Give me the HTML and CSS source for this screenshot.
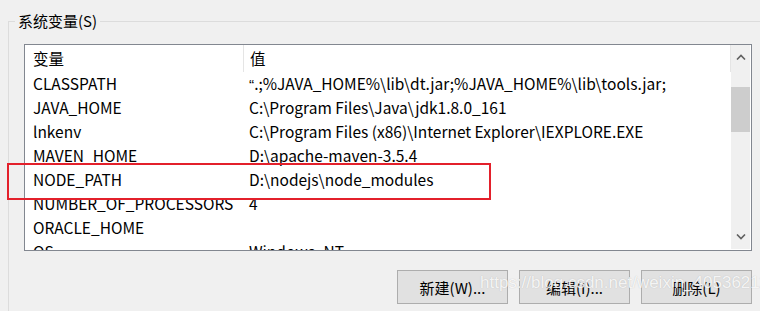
FILE: index.html
```html
<!DOCTYPE html>
<html lang="zh-CN">
<head>
  <meta charset="UTF-8" />
  <title>系统变量</title>
  <link rel="stylesheet" href="styles.css">
</head>
<body>

  <div class="group">
    <span class="group-title">系统变量(S)</span>

    <div class="listbox">
      <div class="list">
        <div class="row head">
          <div class="cell name">变量</div>
          <div class="cell value">值</div>
        </div>
        <div class="row"><div class="cell name">CLASSPATH</div><div class="cell value"><span class="quote">“</span>.;%JAVA_HOME%\lib\dt.jar;%JAVA_HOME%\lib\tools.jar;</div></div>
        <div class="row"><div class="cell name">JAVA_HOME</div><div class="cell value">C:\Program Files\Java\jdk1.8.0_161</div></div>
        <div class="row"><div class="cell name">lnkenv</div><div class="cell value">C:\Program Files (x86)\Internet Explorer\IEXPLORE.EXE</div></div>
        <div class="row"><div class="cell name">MAVEN_HOME</div><div class="cell value">D:\apache-maven-3.5.4</div></div>
        <div class="row"><div class="cell name">NODE_PATH</div><div class="cell value">D:\nodejs\node_modules</div></div>
        <div class="row"><div class="cell name">NUMBER_OF_PROCESSORS</div><div class="cell value">4</div></div>
        <div class="row"><div class="cell name">ORACLE_HOME</div><div class="cell value"></div></div>
        <div class="row"><div class="cell name">OS</div><div class="cell value">Windows_NT</div></div>
      </div>

      <!-- scrollbar -->
      <div class="scrollbar">
        <div class="arrow">
          <svg width="10" height="6" viewBox="0 0 10 6"><path d="M1 5.5 L5 1.5 L9 5.5" fill="none" stroke="#606060" stroke-width="1.6"/></svg>
        </div>
        <div class="track"><div class="thumb"></div></div>
        <div class="arrow">
          <svg width="10" height="6" viewBox="0 0 10 6"><path d="M1 0.5 L5 4.5 L9 0.5" fill="none" stroke="#606060" stroke-width="1.6"/></svg>
        </div>
      </div>
    </div>

    <div class="buttons">
      <button>新建(W)...</button>
      <button>编辑(I)...</button>
      <button>删除(L)</button>
    </div>
  </div>

  <div class="highlight"></div>
  <div class="watermark">https://blog.csdn.net/weixin_40536211</div>

</body>
</html>
```

FILE: styles.css
```css
body {
  margin: 0;
  background: #f0f0f0;
  font-family: "Noto Sans CJK SC", "Noto Sans", sans-serif;
  font-size: 15px;
  color: #000;
  width: 760px;
  height: 311px;
  overflow: hidden;
  position: relative;
}

.group {
  margin: 21px 0 0 8px;
  border-top: 1px solid #dcdcdc;
  border-left: 1px solid #dcdcdc;
  height: 300px;
}

.group-title {
  display: inline-block;
  margin: -11px 0 0 6px;
  padding: 0 3px;
  background: #f0f0f0;
  line-height: 20px;
  height: 20px;
  vertical-align: top;
}

.listbox {
  display: flex;
  margin: 1px 0 0 15px;
  width: 726px;
  height: 205px;
  border: 1px solid #828790;
  background: #fff;
  overflow: hidden;
}

.list {
  flex: 1;
  font-size: 15.5px;
}

.row {
  display: flex;
  height: 24px;
  line-height: 23px;
  white-space: nowrap;
}

.row.head {
  height: 27px;
  line-height: 27px;
}

.cell.name {
  width: 210px;
  padding-left: 8px;
}

.cell.value {
  padding-left: 6px;
}

.quote {
  font-family: "Liberation Sans", sans-serif;
}

.row.head .cell.name {
  border-right: 1px solid #e5e5e5;
}

.row.head .cell.value {
  flex: 1;
  border-right: 1px solid #e5e5e5;
}

.scrollbar {
  width: 19px;
  margin-right: 1px;
  background: #f0f0f0;
  display: flex;
  flex-direction: column;
  height: 204px;
}

.arrow {
  height: 24px;
  display: flex;
  align-items: center;
  justify-content: center;
}

.track {
  flex: 1;
  padding-top: 18px;
}

.thumb {
  height: 45px;
  background: #cdcdcd;
}

.buttons {
  display: flex;
  justify-content: flex-end;
  gap: 11px;
  margin: 19px 0 0 0;
  width: 743px;
}

.buttons button {
  width: 111px;
  height: 34px;
  background: #e1e1e1;
  border: 1px solid #adadad;
  font-family: "Noto Sans CJK SC", "Noto Sans", sans-serif;
  font-size: 15px;
  color: #000;
  padding: 0;
}

.highlight {
  position: absolute;
  left: 7px;
  top: 163px;
  width: 480px;
  height: 33px;
  border: 2px solid #e3202b;
}

.watermark {
  position: absolute;
  left: 480px;
  top: 273px;
  font-family: "Liberation Sans", sans-serif;
  font-size: 17px;
  color: rgba(255, 255, 255, 0.85);
  text-shadow: 0 0 1px rgba(120, 120, 120, 0.4);
  white-space: nowrap;
}
```
